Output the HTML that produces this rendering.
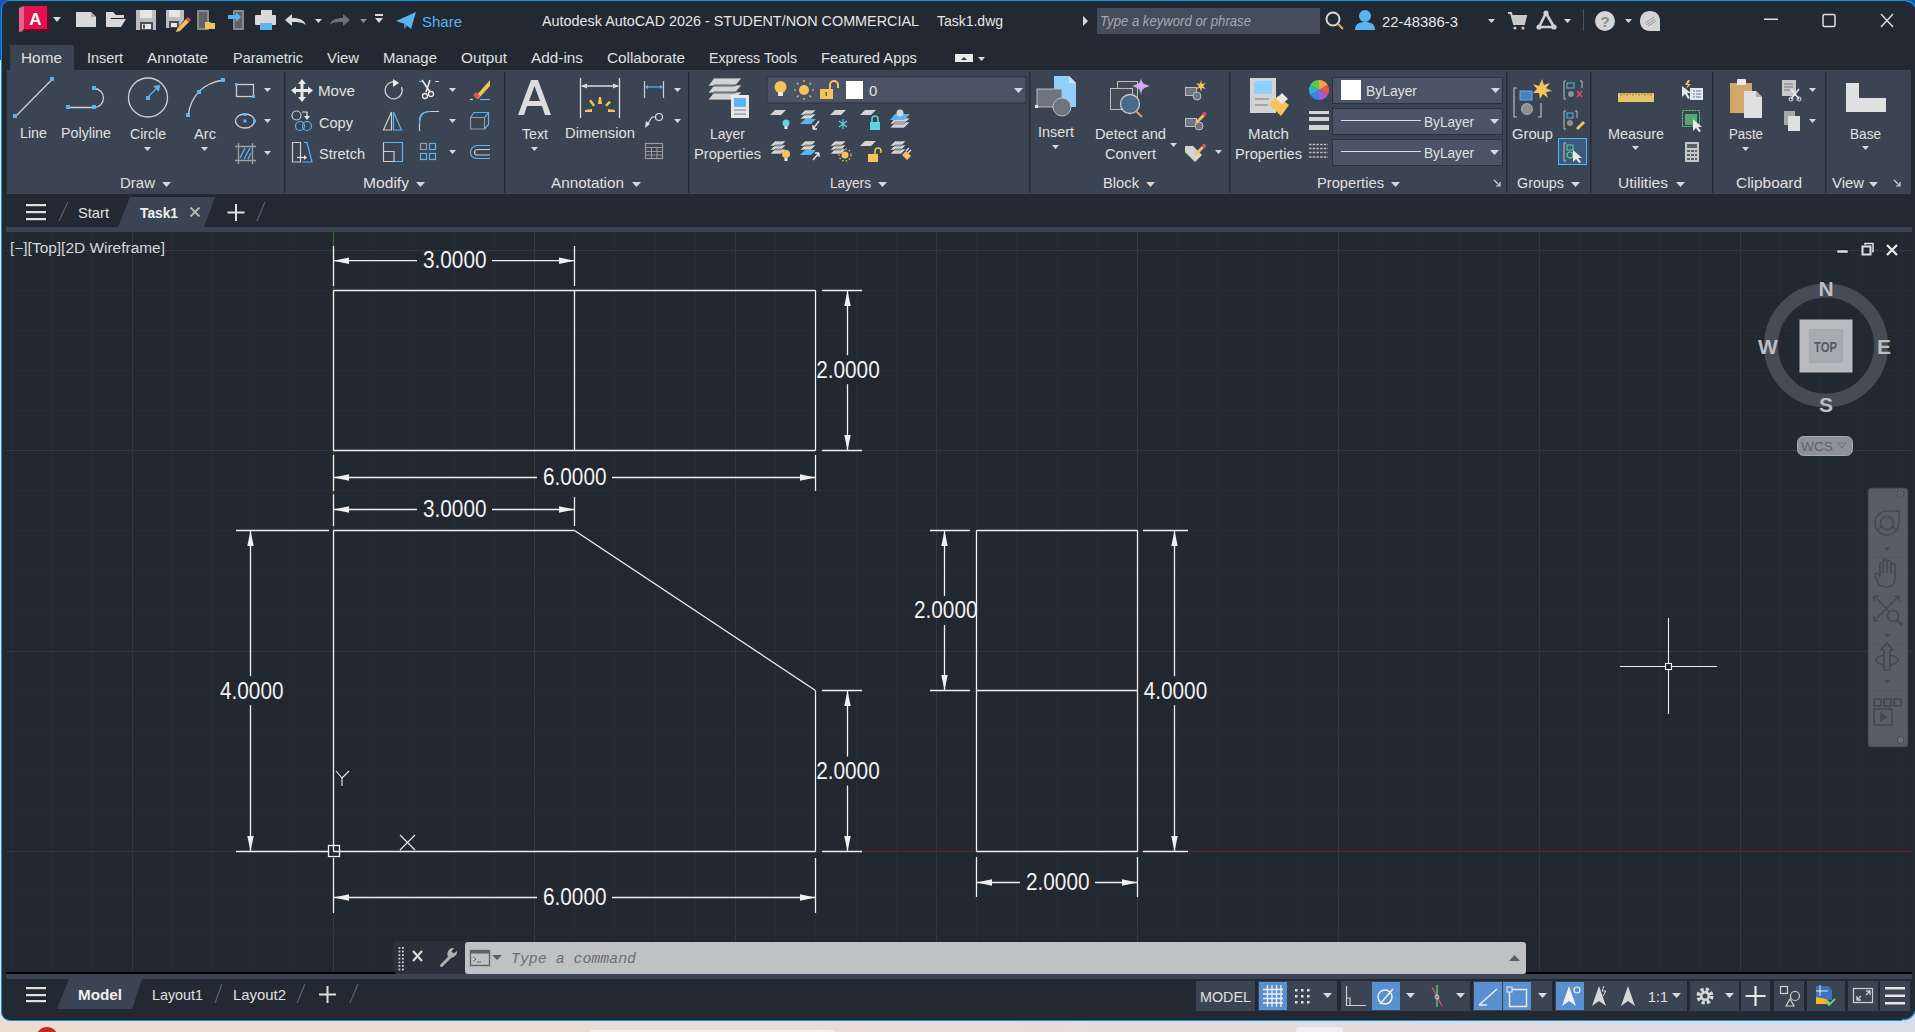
<!DOCTYPE html>
<html><head><meta charset="utf-8">
<style>
*{margin:0;padding:0;box-sizing:border-box}
html,body{width:1915px;height:1032px;overflow:hidden;background:linear-gradient(to right,#eddcd2,#eadcd6 50%,#dcdce8);font-family:"Liberation Sans",sans-serif;color:#e8e8e8}
.a{position:absolute}
#win{position:absolute;left:0;top:0;width:1915px;height:1021px;overflow:hidden}
svg{position:absolute;left:0;top:0;overflow:visible}
</style></head><body>
<div class="a" style="left:0;top:0;width:30px;height:60px;background:#1f4fb8"></div><div class="a" style="left:0;top:60px;width:1px;height:960px;background:#efe2da"></div>
<div class="a" style="left:1885px;top:0;width:30px;height:30px;background:#1a50c0"></div>
<div class="a" style="left:590px;top:1030px;width:245px;height:6px;border-radius:4px;background:#f4f0f0"></div>
<div class="a" style="left:1296px;top:1027px;width:47px;height:8px;border-radius:4px;background:#f0eef2"></div>
<div class="a" style="left:36px;top:1027px;width:22px;height:22px;border-radius:50%;background:#c8281e"></div>
<div class="a" style="left:1px;top:0;width:1925px;height:1021px;border-radius:9px;border:1px solid #0a96e0;background:#222933"></div>
<div id="win">
<!-- title bar -->
<svg width="1915" height="42">
<!-- app logo -->
<path d="M19 8 L24 6 L24 31 L19 32 Z" fill="#e8638a"/>
<rect x="24" y="6" width="23" height="23" fill="#e2114f"/>
<path d="M22 31 L49 31 L49 11 L47 11 L47 29 L24 29 Z" fill="#7a0424"/>
<text x="35.5" y="25" font-size="17" font-weight="bold" fill="#fff" text-anchor="middle" font-family="Liberation Sans">A</text>
<path d="M53 17 L61 17 L57 22 Z" fill="#d8d8d8"/>
<!-- new -->
<path d="M76 12 L91 12 L96 17 L96 27 L76 27 Z" fill="#d9d9d9"/>
<path d="M91 12 L91 17 L96 17 Z" fill="#a9a9a9"/>
<!-- open -->
<path d="M106 12 L113 12 L116 15 L124 15 L124 18 L111 18 L106 27 Z" fill="#d9d9d9"/>
<path d="M109 19 L126 19 L121 27 L106 27 Z" fill="#d9d9d9"/>
<!-- save -->
<path d="M136 10 L156 10 L156 30 L136 30 Z" fill="#bdbdbd"/>
<rect x="140" y="10" width="12" height="8" fill="#e6e6e6"/>
<rect x="140" y="22" width="13" height="8" fill="#4a4e55"/>
<rect x="142" y="24" width="9" height="5" fill="#e6e6e6"/>
<rect x="143" y="24.5" width="2" height="4" fill="#4a4e55"/>
<!-- saveas -->
<path d="M166 10 L184 10 L184 20 L178 28 L166 28 Z" fill="#bdbdbd"/>
<rect x="169" y="10" width="11" height="7" fill="#e6e6e6"/>
<rect x="169" y="21" width="10" height="7" fill="#4a4e55"/>
<rect x="171" y="23" width="6" height="4" fill="#e6e6e6"/>
<path d="M177 29 L186 19 L189 22 L180 31 L176 32 Z" fill="#f2c25a"/>
<path d="M186 19 L188 17 L191 20 L189 22 Z" fill="#e84a5f"/>
<!-- open from phone -->
<rect x="197" y="10" width="12" height="20" rx="1" fill="#8a8a8a"/>
<rect x="199" y="12" width="8" height="16" fill="#5e6166"/>
<path d="M205 22 L210 22 L211 23 L215 23 L215 29 L205 29 Z" fill="#f2c25a"/>
<!-- import -->
<rect x="233" y="10" width="11" height="20" rx="1" fill="#8a8a8a"/>
<rect x="235" y="12" width="7" height="16" fill="#5e6166"/>
<path d="M228 15 L236 15 L236 12 L241 17 L236 22 L236 19 L228 19 Z" fill="#5ab4ef"/>
<!-- print -->
<rect x="261" y="10" width="11" height="5" fill="#d9d9d9"/>
<rect x="255" y="15" width="21" height="10" rx="1" fill="#d9d9d9"/>
<rect x="260" y="23" width="12" height="7" fill="#5ab4ef"/>
<!-- undo -->
<path d="M285 20 L292 14 L292 18 C298 18 304 19 306 25 C302 22 298 22 292 22 L292 26 Z" fill="#d9d9d9"/>
<path d="M315 19 L322 19 L318.5 23 Z" fill="#d9d9d9"/>
<!-- redo -->
<path d="M350 20 L343 14 L343 18 C337 18 331 19 330 25 C333 22 337 22 343 22 L343 26 Z" fill="#6b6f77"/>
<path d="M360 19 L367 19 L363.5 23 Z" fill="#8b8f97"/>
<!-- customize -->
<rect x="375" y="14" width="8" height="2" fill="#d9d9d9"/>
<path d="M375 18 L383 18 L379 23 Z" fill="#d9d9d9"/>
<!-- share -->
<path d="M396 21 L416 12 L411 29 L405 24 Z M405 24 L416 12 L405 28 Z" fill="#5ab4ef"/>
<path d="M404 23 L404 29 L407 26 Z" fill="#3f8fcb"/>
<text x="422" y="27" font-size="15" fill="#5ab4ef" font-family="Liberation Sans">Share</text>
<!-- title -->
<text x="542" y="26" font-size="15" fill="#e6e6e6" font-family="Liberation Sans" textLength="377" lengthAdjust="spacingAndGlyphs">Autodesk AutoCAD 2026 - STUDENT/NON COMMERCIAL</text>
<text x="937" y="26" font-size="15" fill="#e6e6e6" font-family="Liberation Sans" textLength="66" lengthAdjust="spacingAndGlyphs">Task1.dwg</text>
<!-- search -->
<path d="M1083 16 L1088 21 L1083 26 Z" fill="#d9d9d9"/>
<rect x="1097" y="8" width="223" height="26" fill="#454c5b"/>
<text x="1100" y="26" font-size="14" font-style="italic" fill="#a3a8b0" font-family="Liberation Sans" textLength="151" lengthAdjust="spacingAndGlyphs">Type a keyword or phrase</text>
<circle cx="1333" cy="19" r="6.5" fill="none" stroke="#d9d9d9" stroke-width="2"/>
<path d="M1338 24 L1343 29" stroke="#d9a35a" stroke-width="2.2"/>
<circle cx="1365" cy="16" r="6" fill="#5ab4ef"/>
<path d="M1355 30 C1355 24 1359 22 1365 22 C1371 22 1375 24 1375 30 Z" fill="#5ab4ef"/>
<text x="1382" y="27" font-size="15" fill="#e6e6e6" font-family="Liberation Sans" textLength="76" lengthAdjust="spacingAndGlyphs">22-48386-3</text>
<path d="M1488 19 L1495 19 L1491.5 23 Z" fill="#d9d9d9"/>
<!-- cart -->
<path d="M1508 13 L1511 13 L1514 24 L1524 24 L1526 16 L1512 16" fill="none" stroke="#c9c9c9" stroke-width="2"/>
<rect x="1513" y="17" width="12" height="6" fill="#c9c9c9"/>
<circle cx="1515" cy="28" r="1.6" fill="#c9c9c9"/><circle cx="1523" cy="28" r="1.6" fill="#c9c9c9"/>
<!-- a360 -->
<path d="M1546 13 L1539 27 L1554 27 Z" fill="none" stroke="#d0d0d0" stroke-width="2.6" stroke-linejoin="round"/>
<circle cx="1546" cy="13" r="2.6" fill="#d0d0d0"/><circle cx="1539" cy="27" r="2.6" fill="#d0d0d0"/><circle cx="1554" cy="27" r="2.6" fill="#d0d0d0"/>
<path d="M1564 19 L1571 19 L1567.5 23 Z" fill="#d9d9d9"/>
<rect x="1583" y="9" width="1" height="22" fill="#4b5260"/>
<!-- help -->
<circle cx="1605" cy="21" r="10" fill="#d4d4d4"/>
<text x="1605" y="27" font-size="15" font-weight="bold" fill="#8a8a8a" text-anchor="middle" font-family="Liberation Sans">?</text>
<path d="M1625 19 L1632 19 L1628.5 23 Z" fill="#d9d9d9"/>
<!-- chat -->
<path d="M1650 11 C1656 11 1660 15 1660 21 L1660 31 L1650 31 C1644 31 1640 27 1640 21 C1640 15 1644 11 1650 11 Z" fill="#d4d4d4"/>
<path d="M1645 23 L1654 17 M1646 25 L1655 19 M1648 26 L1656 21" stroke="#9a9a9a" stroke-width="1"/>
<!-- window controls -->
<rect x="1764" y="18.5" width="14" height="1.5" fill="#e0e0e0"/>
<rect x="1823" y="14.5" width="12" height="12" rx="1.5" fill="none" stroke="#e0e0e0" stroke-width="1.5"/>
<path d="M1881 14 L1893 27 M1893 14 L1881 27" stroke="#e0e0e0" stroke-width="1.4"/>
</svg>
<!-- tabs -->
<div class="a" style="left:10px;top:45px;width:64px;height:26px;background:#3b4453"></div>
<svg width="1000" height="80" font-family="Liberation Sans" font-size="15" fill="#e0e0e0">
<text x="21" y="63" textLength="41" lengthAdjust="spacingAndGlyphs">Home</text>
<text x="87" y="63" textLength="36" lengthAdjust="spacingAndGlyphs">Insert</text>
<text x="147" y="63" textLength="61" lengthAdjust="spacingAndGlyphs">Annotate</text>
<text x="233" y="63" textLength="70" lengthAdjust="spacingAndGlyphs">Parametric</text>
<text x="327" y="63" textLength="32" lengthAdjust="spacingAndGlyphs">View</text>
<text x="383" y="63" textLength="54" lengthAdjust="spacingAndGlyphs">Manage</text>
<text x="461" y="63" textLength="46" lengthAdjust="spacingAndGlyphs">Output</text>
<text x="531" y="63" textLength="52" lengthAdjust="spacingAndGlyphs">Add-ins</text>
<text x="607" y="63" textLength="78" lengthAdjust="spacingAndGlyphs">Collaborate</text>
<text x="709" y="63" textLength="88" lengthAdjust="spacingAndGlyphs">Express Tools</text>
<text x="821" y="63" textLength="96" lengthAdjust="spacingAndGlyphs">Featured Apps</text>
<rect x="955" y="54" width="18" height="8" fill="#e8e8e8"/>
<path d="M961 60 L967 60 L964 57 Z" fill="#333"/>
<path d="M978 57 L985 57 L981.5 61 Z" fill="#d9d9d9"/>
</svg>
<div class="a" style="left:7px;top:70px;width:1904px;height:124px;background:#3b4453"></div>
<svg width="1915" height="232" font-family="Liberation Sans" font-size="15" fill="#e0e0e0">
<defs>
<path id="dd" d="M0 0 L9 0 L4.5 5 Z" fill="#d9d9d9"/>
<path id="dds" d="M0 0 L7 0 L3.5 4 Z" fill="#d9d9d9"/>
</defs>
<!-- panel separators -->
<g fill="#262c36">
<rect x="284" y="72" width="1.5" height="121"/>
<rect x="504" y="72" width="1.5" height="121"/>
<rect x="688" y="72" width="1.5" height="121"/>
<rect x="1029" y="72" width="1.5" height="121"/>
<rect x="1229" y="72" width="1.5" height="121"/>
<rect x="1506" y="72" width="1.5" height="121"/>
<rect x="1590" y="72" width="1.5" height="121"/>
<rect x="1712" y="72" width="1.5" height="121"/>
<rect x="1825" y="72" width="1.5" height="121"/>
</g>
<!-- ============ DRAW ============ -->
<path d="M15.5 116.5 L52 79.5" stroke="#cfcfcf" stroke-width="1.3"/>
<rect x="13" y="114" width="4" height="4" fill="#5ab4ef"/><rect x="50" y="77" width="4" height="4" fill="#5ab4ef"/>
<path d="M68 107.5 L94 107.5 A 9.5 9.5 0 0 0 94 88.5" fill="none" stroke="#cfcfcf" stroke-width="1.3"/>
<rect x="66" y="105" width="4" height="4" fill="#5ab4ef"/><rect x="92" y="105" width="4" height="4" fill="#5ab4ef"/><rect x="92" y="86" width="4" height="4" fill="#5ab4ef"/>
<circle cx="148" cy="97.5" r="19.5" fill="none" stroke="#cfcfcf" stroke-width="1.3"/>
<path d="M148 97 L158 87" stroke="#5ab4ef" stroke-width="1.3"/><path d="M160 85 L153 86 L159 92 Z" fill="#5ab4ef"/>
<rect x="146" y="96" width="4" height="4" fill="#5ab4ef"/>
<path d="M188 115.5 C191 96 203 83 223.5 80" fill="none" stroke="#cfcfcf" stroke-width="1.3"/>
<rect x="186" y="113" width="4" height="4" fill="#5ab4ef"/><rect x="197" y="90" width="4" height="4" fill="#5ab4ef"/><rect x="221" y="78" width="4" height="4" fill="#5ab4ef"/>
<text x="20" y="138" textLength="27" lengthAdjust="spacingAndGlyphs">Line</text>
<text x="61" y="138" textLength="50" lengthAdjust="spacingAndGlyphs">Polyline</text>
<text x="130" y="139" textLength="36" lengthAdjust="spacingAndGlyphs">Circle</text>
<text x="194" y="139" textLength="22" lengthAdjust="spacingAndGlyphs">Arc</text>
<path d="M144 147 L151 147 L147.5 151 Z" fill="#d9d9d9"/><path d="M201 147 L208 147 L204.5 151 Z" fill="#d9d9d9"/>
<!-- rect/ellipse/hatch -->
<rect x="236.5" y="84.5" width="17" height="12" fill="none" stroke="#cfcfcf" stroke-width="1.3"/>
<rect x="235" y="83" width="3" height="3" fill="#5ab4ef"/><rect x="252" y="95" width="3" height="3" fill="#5ab4ef"/>
<path d="M264 88 L271 88 L267.5 92 Z" fill="#d9d9d9"/>
<ellipse cx="245" cy="121" rx="9.5" ry="7" fill="none" stroke="#cfcfcf" stroke-width="1.3"/>
<rect x="243.5" y="113" width="3" height="3" fill="#5ab4ef"/><rect x="243.5" y="119.5" width="3" height="3" fill="#5ab4ef"/><rect x="253" y="119.5" width="3" height="3" fill="#5ab4ef"/>
<path d="M264 119 L271 119 L267.5 123 Z" fill="#d9d9d9"/>
<path d="M235 146.5 L256 146.5 M235 160.5 L256 160.5 M238.5 143 L238.5 164 M252.5 143 L252.5 164" stroke="#a0a0a0" stroke-width="1.3"/>
<path d="M240 158 L245 148 M244 159 L250 148 M248 159 L251 153" stroke="#5ab4ef" stroke-width="1.4"/>
<path d="M264 151 L271 151 L267.5 155 Z" fill="#d9d9d9"/>
<text x="120" y="188" textLength="35" lengthAdjust="spacingAndGlyphs">Draw</text>
<path d="M162 182 L171 182 L166.5 187 Z" fill="#d9d9d9"/>
<!-- ============ MODIFY ============ -->
<g fill="#e8e8e8"><path d="M302 79 L306 84 L303.5 84 L303.5 89 L308 89 L308 86.5 L313 90.5 L308 94.5 L308 92 L303.5 92 L303.5 97 L306 97 L302 102 L298 97 L300.5 97 L300.5 92 L296 92 L296 94.5 L291 90.5 L296 86.5 L296 89 L300.5 89 L300.5 84 L298 84 Z"/></g>
<text x="318" y="96" textLength="37" lengthAdjust="spacingAndGlyphs">Move</text>
<circle cx="296.5" cy="115.5" r="4.5" fill="none" stroke="#cfcfcf" stroke-width="1.2"/>
<path d="M302 112 L307 112 L307 117" fill="none" stroke="#e8e8e8" stroke-width="1.2"/><path d="M304 116 L310 116 L307 120 Z" fill="#e8e8e8"/>
<circle cx="300" cy="126" r="4.5" fill="none" stroke="#5ab4ef" stroke-width="1.2"/><circle cx="307" cy="126" r="4.5" fill="none" stroke="#5ab4ef" stroke-width="1.2"/>
<text x="319" y="128" textLength="34" lengthAdjust="spacingAndGlyphs">Copy</text>
<path d="M292.5 142.5 L300.5 142.5 L300.5 162 L292.5 162 Z" fill="none" stroke="#cfcfcf" stroke-width="1.2"/>
<path d="M304 142.5 L307 142.5 L312 162 L302 162" fill="none" stroke="#5ab4ef" stroke-width="1.2"/>
<path d="M297 157.5 L305 157.5" stroke="#e8e8e8" stroke-width="1.2"/><path d="M304 155 L307 157.5 L304 160 Z" fill="#e8e8e8"/>
<text x="319" y="159" textLength="46" lengthAdjust="spacingAndGlyphs">Stretch</text>
<!-- rotate -->
<path d="M398 83 A 8.5 8.5 0 1 0 401.5 87" fill="none" stroke="#cfcfcf" stroke-width="1.3"/>
<path d="M393 79 L399 83 L393 87 Z" fill="#e8e8e8"/>
<!-- trim -->
<path d="M419 81.5 L424 81.5 M435 81.5 L439 81.5" stroke="#cfcfcf" stroke-width="1.2"/>
<path d="M419 81.5 L424 81.5" stroke="#5ab4ef" stroke-width="1.2"/>
<path d="M422 80 L430 92 M430 80 L426 92" stroke="#e8e8e8" stroke-width="1.6"/>
<circle cx="425" cy="96" r="2.5" fill="none" stroke="#e8e8e8" stroke-width="1.3"/><circle cx="431" cy="94" r="2.5" fill="none" stroke="#e8e8e8" stroke-width="1.3"/>
<path d="M449 88 L456 88 L452.5 92 Z" fill="#d9d9d9"/>
<!-- erase -->
<path d="M475 97 L490 80 L490 86 L478 99 Z" fill="#f2c25a"/>
<path d="M473 95 L476 92 L480 96 L477 99 Z" fill="#e84a5f"/>
<path d="M470 99.5 L473 99.5" stroke="#cfcfcf" stroke-width="1.2"/><path d="M480 99.5 L490 99.5" stroke="#5ab4ef" stroke-width="1.2"/>
<!-- mirror -->
<path d="M391.5 112 L391.5 130 L383.5 130 Z" fill="none" stroke="#cfcfcf" stroke-width="1.2"/>
<path d="M393.5 112 L393.5 130 L401.5 130 Z" fill="none" stroke="#5ab4ef" stroke-width="1.2"/>
<!-- fillet -->
<path d="M419.5 131 L419.5 121 C419.5 115 423 111.5 430 111.5 L439 111.5" fill="none" stroke="#cfcfcf" stroke-width="1.2"/>
<path d="M419.5 124 C419.5 115 423 111.5 430 111.5" fill="none" stroke="#5ab4ef" stroke-width="1.2"/>
<path d="M449 119 L456 119 L452.5 123 Z" fill="#d9d9d9"/>
<!-- explode -->
<path d="M470.5 117.5 L484.5 117.5 L484.5 129 L470.5 129 Z" fill="none" stroke="#9a9a9a" stroke-width="1.2"/>
<path d="M470.5 117.5 L474 112.5 L488.5 112.5 L484.5 117.5 M488.5 112.5 L488.5 124.5 L484.5 129" fill="none" stroke="#5ab4ef" stroke-width="1.2"/>
<!-- scale -->
<path d="M383.5 142.5 L402.5 142.5 L402.5 161.5 L394 161.5" fill="none" stroke="#5ab4ef" stroke-width="1.2"/>
<path d="M383.5 142.5 L383.5 161.5 L394 161.5 L394 151.5 L383.5 151.5" fill="none" stroke="#cfcfcf" stroke-width="1.2"/>
<!-- array -->
<rect x="420.5" y="143.5" width="6" height="6" fill="none" stroke="#9a9a9a" stroke-width="1.2"/>
<rect x="429.5" y="143.5" width="6" height="6" fill="none" stroke="#5ab4ef" stroke-width="1.2"/>
<rect x="420.5" y="153.5" width="6" height="6" fill="none" stroke="#5ab4ef" stroke-width="1.2"/>
<rect x="429.5" y="153.5" width="6" height="6" fill="none" stroke="#5ab4ef" stroke-width="1.2"/>
<path d="M449 150 L456 150 L452.5 154 Z" fill="#d9d9d9"/>
<!-- offset -->
<path d="M490 145.5 L478 145.5 C473 145.5 470.5 149 470.5 152.5 C470.5 156 473 158.5 478 158.5 L490 158.5" fill="none" stroke="#5ab4ef" stroke-width="1.2"/>
<path d="M490 149.5 L478 149.5 C475.5 149.5 474.5 151 474.5 152.5 C474.5 154 475.5 155 478 155 L490 155" fill="none" stroke="#cfcfcf" stroke-width="1.2"/>
<text x="363" y="188" textLength="46" lengthAdjust="spacingAndGlyphs">Modify</text>
<path d="M416 182 L425 182 L420.5 187 Z" fill="#d9d9d9"/>
<!-- ============ ANNOTATION ============ -->
<path d="M518 115 L531 80 L538 80 L551 115 L545 115 L542 106 L527 106 L524 115 Z M529 101 L540 101 L534.5 86 Z" fill="#dcdcdc"/>
<text x="522" y="139" textLength="26" lengthAdjust="spacingAndGlyphs">Text</text>
<path d="M531 147 L538 147 L534.5 151 Z" fill="#d9d9d9"/>
<path d="M580.5 78 L580.5 118 M619.5 78 L619.5 118 M582 86 L618 86" stroke="#dcdcdc" stroke-width="1.3"/>
<path d="M581 86 L587 83.5 L587 88.5 Z M619 86 L613 83.5 L613 88.5 Z" fill="#dcdcdc"/>
<g fill="#f5c35a"><path d="M599 97 L601 97 L602 104 L598 104 Z"/><path d="M589 101 L591 99.5 L595 105 L593 106.5 Z"/><path d="M609 101 L611 102.5 L607 106.5 L605 105 Z"/><path d="M585 110 L592 109 L592 112 L585 112 Z"/><path d="M608 109 L615 110 L615 112 L608 112 Z"/></g>
<text x="565" y="138" textLength="70" lengthAdjust="spacingAndGlyphs">Dimension</text>
<path d="M644.5 81 L644.5 98 M663.5 81 L663.5 98" stroke="#cfcfcf" stroke-width="1.2"/>
<path d="M646 87 L662 87" stroke="#5ab4ef" stroke-width="1.2"/><path d="M645 87 L648 85 L648 89 Z M663 87 L660 85 L660 89 Z" fill="#5ab4ef"/>
<path d="M674 88 L681 88 L677.5 92 Z" fill="#d9d9d9"/>
<circle cx="659" cy="117" r="3.5" fill="none" stroke="#dcdcdc" stroke-width="1.2"/>
<path d="M655.5 117 L652 117 L647 125" fill="none" stroke="#dcdcdc" stroke-width="1.2"/><path d="M645 128 L646 121 L650 124 Z" fill="#dcdcdc"/>
<path d="M674 119 L681 119 L677.5 123 Z" fill="#d9d9d9"/>
<rect x="645.5" y="143.5" width="17" height="15" fill="none" stroke="#9a9a9a" stroke-width="1.2"/>
<path d="M645.5 147.5 L662.5 147.5 M645.5 151.5 L662.5 151.5 M645.5 155 L662.5 155 M651.5 147.5 L651.5 158.5 M657 147.5 L657 158.5" stroke="#9a9a9a" stroke-width="1"/>
<text x="551" y="188" textLength="73" lengthAdjust="spacingAndGlyphs">Annotation</text>
<path d="M632 182 L641 182 L636.5 187 Z" fill="#d9d9d9"/>
<!-- ============ LAYERS ============ -->
<path d="M714 78 L742 78 L735 86 L708 86 Z M714 85 L742 85 L735 93 L708 93 Z M714 92 L742 92 L735 100 L708 100 Z" fill="#d4d4d4" stroke="#3b4453" stroke-width="0.8"/>
<rect x="731" y="95" width="18" height="23" fill="#e8e8e8"/>
<rect x="734" y="98" width="12" height="9" fill="#5ab4ef"/>
<path d="M734 110 L746 110 M734 114 L746 114" stroke="#777" stroke-width="1"/>
<text x="710" y="139" textLength="35" lengthAdjust="spacingAndGlyphs">Layer</text>
<text x="694" y="159" textLength="67" lengthAdjust="spacingAndGlyphs">Properties</text>
<rect x="767" y="77" width="259" height="26" fill="#4a5466" stroke="#2c323d" stroke-width="1"/>
<circle cx="780.5" cy="87" r="6" fill="#f5c35a"/><rect x="778" y="92" width="5" height="4" fill="#e8e8e8"/>
<circle cx="804" cy="90" r="5" fill="#f5c35a"/>
<path d="M804 80 L804 82 M804 98 L804 100 M794 90 L796 90 M812 90 L814 90 M797 83 L798.5 84.5 M809.5 95.5 L811 97 M811 83 L809.5 84.5 M798.5 95.5 L797 97" stroke="#f5c35a" stroke-width="1.2"/>
<rect x="820" y="89" width="13" height="10" fill="#f5c35a"/>
<path d="M830 89 L830 85 A 4 4 0 0 1 838 85 L838 88" fill="none" stroke="#f5c35a" stroke-width="2"/>
<rect x="825.5" y="92" width="1.5" height="4" fill="#5a5a5a"/>
<rect x="846" y="81" width="17" height="18" fill="#ffffff"/>
<text x="869" y="96">0</text>
<path d="M1014 88 L1023 88 L1018.5 93 Z" fill="#d9d9d9"/>
<g transform="translate(770,110)"><path d="M5 0 L16 0 L11 5 L0 5 Z" fill="#d4d4d4"/><circle cx="16" cy="13" r="3.5" fill="#5fd3e0"/><rect x="14.5" y="16" width="3" height="3" fill="#e8e8e8"/></g>
<g transform="translate(800,110)"><path d="M5 0 L16 0 L11 5 L0 5 Z M5 4 L16 4 L11 9 L0 9 Z" fill="#d4d4d4" stroke="#3b4453" stroke-width="0.6"/><path d="M5 9 L16 9 L11 14 L0 14 Z" fill="#5ab4ef"/><path d="M19 11 L13 19 M13 19 L13 15 M13 19 L17 19" stroke="#e8e8e8" stroke-width="1.3"/></g>
<g transform="translate(830,110)"><path d="M5 0 L16 0 L11 5 L0 5 Z" fill="#d4d4d4"/><path d="M13 9 L13 19 M9 11 L17 17 M17 11 L9 17" stroke="#5fd3e0" stroke-width="1.2"/></g>
<g transform="translate(860,110)"><path d="M5 0 L16 0 L11 5 L0 5 Z" fill="#d4d4d4"/><rect x="10" y="12" width="10" height="8" fill="#5fd3e0"/><path d="M12 12 L12 9 A 3 3 0 0 1 18 9 L18 12" fill="none" stroke="#5fd3e0" stroke-width="1.5"/></g>
<g transform="translate(890,110)"><path d="M5 12 L20 12 L14 18 L0 18 Z M5 8 L20 8 L14 14 L0 14 Z" fill="#d4d4d4" stroke="#3b4453" stroke-width="0.6"/><path d="M5 4 L20 4 L14 10 L0 10 Z" fill="#5ab4ef"/><circle cx="10" cy="3" r="3.5" fill="#d4d4d4"/></g>
<g transform="translate(770,141)"><path d="M5 0 L16 0 L11 5 L0 5 Z M5 4 L16 4 L11 9 L0 9 Z M5 8 L16 8 L11 13 L0 13 Z" fill="#d4d4d4" stroke="#3b4453" stroke-width="0.6"/><circle cx="16" cy="13" r="4" fill="#f5c35a"/><rect x="14.5" y="17" width="3" height="3" fill="#e8e8e8"/></g>
<g transform="translate(800,141)"><path d="M5 0 L16 0 L11 5 L0 5 Z M5 4 L16 4 L11 9 L0 9 Z" fill="#d4d4d4" stroke="#3b4453" stroke-width="0.6"/><path d="M5 9 L16 9 L11 14 L0 14 Z" fill="#5ab4ef"/><path d="M13 19 L19 12 M19 12 L15 12 M19 12 L19 16" stroke="#e8e8e8" stroke-width="1.3"/></g>
<g transform="translate(830,141)"><path d="M5 0 L16 0 L11 5 L0 5 Z M5 4 L16 4 L11 9 L0 9 Z M5 8 L16 8 L11 13 L0 13 Z" fill="#d4d4d4" stroke="#3b4453" stroke-width="0.6"/><circle cx="15" cy="14" r="3.5" fill="#f5c35a"/><circle cx="15" cy="14" r="6" fill="none" stroke="#f5c35a" stroke-width="1.2" stroke-dasharray="1.5 2"/></g>
<g transform="translate(860,141)"><path d="M5 0 L16 0 L11 5 L0 5 Z" fill="#d4d4d4"/><rect x="8" y="13" width="10" height="8" fill="#f5c35a"/><path d="M15 13 L15 10 A 3 3 0 0 1 21 10 L21 12" fill="none" stroke="#f5c35a" stroke-width="1.5"/></g>
<g transform="translate(890,141)"><path d="M5 0 L16 0 L11 5 L0 5 Z M5 4 L16 4 L11 9 L0 9 Z M5 8 L16 8 L11 13 L0 13 Z" fill="#d4d4d4" stroke="#3b4453" stroke-width="0.6"/><path d="M12 14 L16 10 L21 15 L17 19 Z" fill="#f5c35a"/><path d="M16 10 L19 7 M18 12 L21 9" stroke="#e8e8e8" stroke-width="1.3"/></g>
<text x="830" y="188" textLength="41" lengthAdjust="spacingAndGlyphs">Layers</text>
<path d="M878 182 L887 182 L882.5 187 Z" fill="#d9d9d9"/>
<!-- ============ BLOCK ============ -->
<path d="M1054 76 L1069 76 L1076 83 L1076 107 L1054 107 Z" fill="#8fd0ff"/>
<path d="M1069 76 L1069 83 L1076 83 Z" fill="#cbe8ff"/>
<rect x="1037" y="89" width="25" height="18" fill="#6f7580" stroke="#bdbdbd" stroke-width="1"/>
<circle cx="1062" cy="107" r="9" fill="#6f7580" stroke="#bdbdbd" stroke-width="1"/>
<rect x="1035" y="105" width="3" height="3" fill="#e8e8e8"/>
<text x="1038" y="137" textLength="36" lengthAdjust="spacingAndGlyphs">Insert</text>
<path d="M1052 145 L1059 145 L1055.5 149 Z" fill="#d9d9d9"/>
<rect x="1117.5" y="81.5" width="20" height="20" fill="#454b56" stroke="#bdbdbd" stroke-width="1"/>
<rect x="1110.5" y="88.5" width="22" height="21" fill="#454b56" stroke="#bdbdbd" stroke-width="1"/>
<circle cx="1130" cy="104" r="9.5" fill="#4a6a8a" stroke="#c8c8c8" stroke-width="1.3"/>
<path d="M1136 111 L1142 117" stroke="#d9a35a" stroke-width="1.8"/>
<path d="M1141 78 C1142 83 1143 84 1150 86 C1143 88 1142 89 1141 95 C1140 89 1139 88 1132 86 C1139 84 1140 83 1141 78 Z" fill="#d5a8f0"/>
<text x="1095" y="139" textLength="71" lengthAdjust="spacingAndGlyphs">Detect and</text>
<text x="1105" y="159" textLength="51" lengthAdjust="spacingAndGlyphs">Convert</text>
<path d="M1170 143 L1177 143 L1173.5 147 Z" fill="#d9d9d9"/>
<g transform="translate(1185,80)"><rect x="0.5" y="7.5" width="11" height="8" fill="#6f7580" stroke="#bdbdbd" stroke-width="1"/><circle cx="12" cy="16" r="4" fill="#6f7580" stroke="#bdbdbd" stroke-width="1"/><path d="M16 0 L17 4 L21 3 L18 6 L21 9 L17 8 L16 12 L15 8 L11 9 L14 6 L11 3 L15 4 Z" fill="#f5c35a"/></g>
<g transform="translate(1185,111)"><rect x="0.5" y="7.5" width="11" height="8" fill="#6f7580" stroke="#bdbdbd" stroke-width="1"/><circle cx="14" cy="15" r="4" fill="#6f7580" stroke="#bdbdbd" stroke-width="1"/><path d="M10 11 L18 3 L20 5 L12 13 Z" fill="#f5c35a"/><circle cx="19.5" cy="3" r="2" fill="#e84a5f"/></g>
<g transform="translate(1185,142)"><path d="M0 4 L8 4 L17 13 L10 20 L0 10 Z" fill="#d4d4d4"/><path d="M9 12 L17 4 L19 6 L11 14 Z" fill="#f5c35a"/><circle cx="19" cy="4" r="2" fill="#e84a5f"/></g>
<path d="M1215 150 L1222 150 L1218.5 154 Z" fill="#d9d9d9"/>
<text x="1103" y="188" textLength="36" lengthAdjust="spacingAndGlyphs">Block</text>
<path d="M1146 182 L1155 182 L1150.5 187 Z" fill="#d9d9d9"/>
<!-- ============ PROPERTIES ============ -->
<rect x="1250" y="78" width="26" height="35" fill="#d4d4d4"/>
<rect x="1254" y="81" width="18" height="13" fill="#8fd0ff"/>
<path d="M1255 99 L1269 99 M1255 105 L1268 105" stroke="#777" stroke-width="1"/>
<path d="M1269 104 L1278 96 L1289 105 L1281 116 Z" fill="#f5c35a"/>
<path d="M1276 99 L1282 93 L1288 99 L1282 104 Z" fill="#e8e8e8"/>
<text x="1248" y="139" textLength="41" lengthAdjust="spacingAndGlyphs">Match</text>
<text x="1235" y="159" textLength="67" lengthAdjust="spacingAndGlyphs">Properties</text>
<g transform="translate(1319,90)">
<path d="M0 0 L0 -10 A10 10 0 0 1 8.66 -5 Z" fill="#f7a23a"/>
<path d="M0 0 L8.66 -5 A10 10 0 0 1 8.66 5 Z" fill="#e8534a"/>
<path d="M0 0 L8.66 5 A10 10 0 0 1 0 10 Z" fill="#a25ae8"/>
<path d="M0 0 L0 10 A10 10 0 0 1 -8.66 5 Z" fill="#3a7ee8"/>
<path d="M0 0 L-8.66 5 A10 10 0 0 1 -8.66 -5 Z" fill="#2ab4c8"/>
<path d="M0 0 L-8.66 -5 A10 10 0 0 1 0 -10 Z" fill="#5cc85a"/>
</g>
<rect x="1309" y="111" width="20" height="3" fill="#d4d4d4"/><rect x="1309" y="117" width="20" height="4" fill="#d4d4d4"/><rect x="1309" y="125" width="20" height="5" fill="#d4d4d4"/>
<path d="M1309 144.5 L1328 144.5 M1309 148.5 L1328 148.5 M1309 152.5 L1328 152.5 M1309 157 L1328 157" stroke="#bdbdbd" stroke-width="1.3" stroke-dasharray="2.5 1.2"/>
<rect x="1332.5" y="77.5" width="170" height="26" fill="#4a5466" stroke="#2c323d" stroke-width="1"/>
<rect x="1332.5" y="108.5" width="170" height="26" fill="#4a5466" stroke="#2c323d" stroke-width="1"/>
<rect x="1332.5" y="139.5" width="170" height="26" fill="#4a5466" stroke="#2c323d" stroke-width="1"/>
<rect x="1341" y="80" width="20" height="20" fill="#fff"/>
<text x="1366" y="96" textLength="51" lengthAdjust="spacingAndGlyphs">ByLayer</text>
<path d="M1341 120.5 L1421 120.5 M1341 151.5 L1421 151.5" stroke="#e0e0e0" stroke-width="1"/>
<text x="1424" y="127" textLength="50" lengthAdjust="spacingAndGlyphs">ByLayer</text>
<text x="1424" y="158" textLength="50" lengthAdjust="spacingAndGlyphs">ByLayer</text>
<path d="M1491 88 L1500 88 L1495.5 93 Z" fill="#d9d9d9"/><path d="M1490 119 L1499 119 L1494.5 124 Z" fill="#d9d9d9"/><path d="M1490 150 L1499 150 L1494.5 155 Z" fill="#d9d9d9"/>
<text x="1317" y="188" textLength="67" lengthAdjust="spacingAndGlyphs">Properties</text>
<path d="M1391 182 L1400 182 L1395.5 187 Z" fill="#d9d9d9"/>
<path d="M1494 180 L1500 186 M1500 182 L1500 186 L1496 186" stroke="#d0d0d0" stroke-width="1.2" fill="none"/>
<!-- ============ GROUPS ============ -->
<path d="M1517 88 L1514 88 L1514 117 L1517 117 M1541 103 L1541 117 L1538 117" fill="none" stroke="#bdbdbd" stroke-width="1.2"/>
<rect x="1520" y="91" width="12" height="9" fill="#4a7fbf" stroke="#5ab4ef" stroke-width="1"/>
<circle cx="1527" cy="109" r="5.5" fill="#8a8f98" stroke="#bdbdbd" stroke-width="0.8"/>
<path d="M1542 79 L1544 85 L1550 83 L1546 88 L1552 91 L1546 92 L1548 98 L1543 94 L1540 99 L1539 93 L1533 93 L1537 89 L1533 84 L1539 86 Z" fill="#f5c35a"/>
<text x="1512" y="139" textLength="41" lengthAdjust="spacingAndGlyphs">Group</text>
<g transform="translate(1563,80)"><path d="M3 1 L1 1 L1 19 L3 19 M17 1 L19 1 L19 8" fill="none" stroke="#bdbdbd" stroke-width="1"/><rect x="4" y="3" width="7" height="5" fill="none" stroke="#5ab4ef" stroke-width="1"/><circle cx="8" cy="14" r="3" fill="#8a8f98"/><path d="M14 11 L19 17 M19 11 L14 17" stroke="#e84a5f" stroke-width="1.5"/></g>
<g transform="translate(1563,110)"><path d="M3 1 L1 1 L1 19 L3 19 M12 1 L14 1 L14 8" fill="none" stroke="#bdbdbd" stroke-width="1"/><rect x="4" y="3" width="6" height="5" fill="none" stroke="#5ab4ef" stroke-width="1"/><circle cx="7" cy="13" r="3" fill="#8a8f98"/><path d="M13 18 L20 11 L22 13 L15 20 Z" fill="#f5c35a"/></g>
<rect x="1558.5" y="138.5" width="28" height="26" fill="#3c5a7e" stroke="#5ab4ef" stroke-width="1"/>
<g transform="translate(1563,142)"><path d="M3 1 L1 1 L1 19 L3 19" fill="none" stroke="#bdbdbd" stroke-width="1"/><rect x="4" y="3" width="6" height="5" fill="none" stroke="#5fd37a" stroke-width="1"/><circle cx="7" cy="13" r="3" fill="none" stroke="#5fd37a" stroke-width="1.2"/><path d="M10 8 L10 20 L13 17 L16 21 L18 20 L15 16 L19 16 Z" fill="#e8e8e8"/></g>
<text x="1517" y="188" textLength="47" lengthAdjust="spacingAndGlyphs">Groups</text>
<path d="M1571 182 L1580 182 L1575.5 187 Z" fill="#d9d9d9"/>
<!-- ============ UTILITIES ============ -->
<rect x="1618" y="93" width="36" height="9" fill="#e9c46a"/>
<path d="M1621 93 L1621 96 M1624 93 L1624 95 M1627 93 L1627 96 M1630 93 L1630 95 M1633 93 L1633 96 M1636 93 L1636 95 M1639 93 L1639 96 M1642 93 L1642 95 M1645 93 L1645 96 M1648 93 L1648 95 M1651 93 L1651 96" stroke="#a07a2a" stroke-width="1"/>
<text x="1608" y="139" textLength="56" lengthAdjust="spacingAndGlyphs">Measure</text>
<path d="M1632 146 L1639 146 L1635.5 150 Z" fill="#d9d9d9"/>
<g transform="translate(1682,80)"><path d="M0 6 L0 17 L3 14 L6 19 L8 18 L5 13 L9 13 Z" fill="#e8e8e8"/><rect x="8" y="8" width="13" height="12" fill="#e8e8e8"/><path d="M11 11 L13 11 M14 11 L19 11 M11 14 L13 14 M14 14 L19 14 M11 17 L13 17 M14 17 L19 17" stroke="#4a7fbf" stroke-width="1.2"/><path d="M6 0 L3 5 L6 5 L4 9 L9 4 L6 4 L8 0 Z" fill="#f5c35a"/></g>
<g transform="translate(1682,110)"><rect x="0.5" y="0.5" width="17" height="16" fill="none" stroke="#5fd37a" stroke-width="1" stroke-dasharray="2 1"/><rect x="3" y="4" width="12" height="11" fill="#5fd37a" opacity="0.7"/><path d="M11 9 L11 21 L14 18 L17 22 L19 21 L16 17 L20 17 Z" fill="#e8e8e8"/></g>
<g transform="translate(1685,142)"><rect x="0" y="0" width="14" height="20" rx="1" fill="#c8c8c8"/><rect x="2" y="2" width="10" height="4" fill="#5a5f68"/><path d="M2 9 L5 9 M6 9 L9 9 M10 9 L12 9 M2 13 L5 13 M6 13 L9 13 M10 13 L12 13 M2 17 L5 17 M6 17 L9 17 M10 17 L12 17" stroke="#5a5f68" stroke-width="2"/></g>
<text x="1618" y="188" textLength="50" lengthAdjust="spacingAndGlyphs">Utilities</text>
<path d="M1676 182 L1685 182 L1680.5 187 Z" fill="#d9d9d9"/>
<!-- ============ CLIPBOARD ============ -->
<rect x="1730" y="83" width="22" height="30" fill="#d2a76c"/>
<rect x="1737" y="79" width="9" height="6" rx="1" fill="#e8e8e8"/>
<path d="M1744 91 L1756 91 L1762 97 L1762 118 L1744 118 Z" fill="#e0e0e0"/>
<path d="M1756 91 L1756 97 L1762 97 Z" fill="#b0b0b0"/>
<text x="1729" y="139" textLength="34" lengthAdjust="spacingAndGlyphs">Paste</text>
<path d="M1742 147 L1749 147 L1745.5 151 Z" fill="#d9d9d9"/>
<g transform="translate(1782,80)"><rect x="0" y="0" width="14" height="16" fill="#c8c8c8"/><path d="M2 4 L11 4 M2 7 L11 7 M2 10 L8 10" stroke="#777" stroke-width="1"/><path d="M9 9 L17 19 M17 9 L9 19" stroke="#e8e8e8" stroke-width="1.5"/><circle cx="9" cy="19" r="2" fill="none" stroke="#e8e8e8"/><circle cx="17" cy="19" r="2" fill="none" stroke="#e8e8e8"/></g>
<path d="M1809 88 L1816 88 L1812.5 92 Z" fill="#d9d9d9"/>
<g transform="translate(1784,111)"><rect x="0" y="0" width="11" height="14" fill="#a8a8a8"/><rect x="4" y="5" width="12" height="15" fill="#e0e0e0"/></g>
<path d="M1809 119 L1816 119 L1812.5 123 Z" fill="#d9d9d9"/>
<text x="1736" y="188" textLength="66" lengthAdjust="spacingAndGlyphs">Clipboard</text>
<!-- ============ VIEW ============ -->
<path d="M1846 83 L1859 83 L1859 98 L1886 98 L1886 112 L1846 112 Z" fill="#e0e0e0"/>
<text x="1850" y="139" textLength="31" lengthAdjust="spacingAndGlyphs">Base</text>
<path d="M1862 146 L1869 146 L1865.5 150 Z" fill="#d9d9d9"/>
<text x="1832" y="188" textLength="32" lengthAdjust="spacingAndGlyphs">View</text>
<path d="M1869 182 L1878 182 L1873.5 187 Z" fill="#d9d9d9"/>
<path d="M1894 180 L1900 186 M1900 182 L1900 186 L1896 186" stroke="#d0d0d0" stroke-width="1.2" fill="none"/>
<!-- ============ FILE TABS ============ -->
<path d="M130 197 L215 197 L204 227 L118 227 Z" fill="#3b4453"/>
<rect x="26" y="204" width="20" height="2.2" fill="#e0e0e0"/><rect x="26" y="211" width="20" height="2.2" fill="#e0e0e0"/><rect x="26" y="218" width="20" height="2.2" fill="#e0e0e0"/>
<path d="M68 202 L59 221" stroke="#5a6170" stroke-width="1.2"/>
<text x="78" y="218" textLength="31" lengthAdjust="spacingAndGlyphs">Start</text>
<text x="140" y="218" font-weight="bold" fill="#f0f0f0" textLength="38" lengthAdjust="spacingAndGlyphs">Task1</text>
<path d="M190.5 207.5 L199.5 216.5 M199.5 207.5 L190.5 216.5" stroke="#b8b8b8" stroke-width="1.8"/>
<path d="M236 204 L236 221 M227.5 212.5 L244.5 212.5" stroke="#e0e0e0" stroke-width="2"/>
<path d="M265 202 L257 221" stroke="#5a6170" stroke-width="1.2"/>
</svg>
<div class="a" style="left:6px;top:227px;width:1906px;height:5px;background:#3b4453"></div>
<svg width="1915" height="1032">
<rect x="6" y="232" width="1906" height="740" fill="#212830"/>
<path d="M11.5 232V972M52.5 232V972M92.5 232V972M172.5 232V972M212.5 232V972M253.5 232V972M293.5 232V972M373.5 232V972M413.5 232V972M454.5 232V972M494.5 232V972M574.5 232V972M614.5 232V972M655.5 232V972M695.5 232V972M775.5 232V972M815.5 232V972M856.5 232V972M896.5 232V972M976.5 232V972M1016.5 232V972M1057.5 232V972M1097.5 232V972M1177.5 232V972M1217.5 232V972M1258.5 232V972M1298.5 232V972M1378.5 232V972M1418.5 232V972M1459.5 232V972M1499.5 232V972M1579.5 232V972M1619.5 232V972M1660.5 232V972M1700.5 232V972M1780.5 232V972M1820.5 232V972M1861.5 232V972M1901.5 232V972M6 971.5H1912M6 931.5H1912M6 891.5H1912M6 811.5H1912M6 771.5H1912M6 731.5H1912M6 691.5H1912M6 611.5H1912M6 571.5H1912M6 530.5H1912M6 490.5H1912M6 410.5H1912M6 370.5H1912M6 330.5H1912M6 290.5H1912" stroke="#262b37" stroke-width="1" fill="none"/>
<path d="M132.5 232V972M333.5 232V972M534.5 232V972M735.5 232V972M936.5 232V972M1137.5 232V972M1338.5 232V972M1539.5 232V972M1740.5 232V972M6 851.5H1912M6 651.5H1912M6 450.5H1912M6 250.5H1912" stroke="#313747" stroke-width="1" fill="none"/>
<line x1="862" y1="851.5" x2="1912" y2="851.5" stroke="#6c252a" stroke-width="1.2"/>
<line x1="333.5" y1="232" x2="333.5" y2="851" stroke="#2d6a33" stroke-width="1.2"/>
<line x1="333.5" y1="290.5" x2="815.5" y2="290.5" stroke="#f0f0f0" stroke-width="1.3"/>
<line x1="333.5" y1="450.5" x2="815.5" y2="450.5" stroke="#f0f0f0" stroke-width="1.3"/>
<line x1="333.5" y1="290.5" x2="333.5" y2="450.5" stroke="#f0f0f0" stroke-width="1.3"/>
<line x1="574.5" y1="290.5" x2="574.5" y2="450.5" stroke="#f0f0f0" stroke-width="1.3"/>
<line x1="815.5" y1="290.5" x2="815.5" y2="450.5" stroke="#f0f0f0" stroke-width="1.3"/>
<line x1="333.5" y1="246" x2="333.5" y2="286" stroke="#f0f0f0" stroke-width="1.3"/>
<line x1="574.5" y1="246" x2="574.5" y2="286" stroke="#f0f0f0" stroke-width="1.3"/>
<line x1="333.5" y1="260.7" x2="417.0" y2="260.7" stroke="#f0f0f0" stroke-width="1.3"/>
<line x1="492.0" y1="260.7" x2="574.5" y2="260.7" stroke="#f0f0f0" stroke-width="1.3"/>
<polygon points="333.5,260.7 349.0,257.5 349.0,263.9" fill="#f0f0f0"/>
<polygon points="574.5,260.7 559.0,257.5 559.0,263.9" fill="#f0f0f0"/>
<line x1="822" y1="290.5" x2="862" y2="290.5" stroke="#f0f0f0" stroke-width="1.3"/>
<line x1="822" y1="450.5" x2="862" y2="450.5" stroke="#f0f0f0" stroke-width="1.3"/>
<line x1="847.5" y1="290.5" x2="847.5" y2="355.2" stroke="#f0f0f0" stroke-width="1.3"/>
<line x1="847.5" y1="384.2" x2="847.5" y2="450.5" stroke="#f0f0f0" stroke-width="1.3"/>
<polygon points="847.5,290.5 844.3,306.0 850.7,306.0" fill="#f0f0f0"/>
<polygon points="847.5,450.5 844.3,435.0 850.7,435.0" fill="#f0f0f0"/>
<line x1="333.5" y1="455" x2="333.5" y2="491" stroke="#f0f0f0" stroke-width="1.3"/>
<line x1="815.5" y1="455" x2="815.5" y2="491" stroke="#f0f0f0" stroke-width="1.3"/>
<line x1="333.5" y1="477.5" x2="537.0" y2="477.5" stroke="#f0f0f0" stroke-width="1.3"/>
<line x1="612.0" y1="477.5" x2="815.5" y2="477.5" stroke="#f0f0f0" stroke-width="1.3"/>
<polygon points="333.5,477.5 349.0,474.3 349.0,480.7" fill="#f0f0f0"/>
<polygon points="815.5,477.5 800.0,474.3 800.0,480.7" fill="#f0f0f0"/>
<line x1="333.5" y1="530.5" x2="574.5" y2="530.5" stroke="#f0f0f0" stroke-width="1.3"/>
<line x1="574.5" y1="530.5" x2="815.5" y2="690.5" stroke="#f0f0f0" stroke-width="1.3"/>
<line x1="815.5" y1="690.5" x2="815.5" y2="851.5" stroke="#f0f0f0" stroke-width="1.3"/>
<line x1="333.5" y1="851.5" x2="815.5" y2="851.5" stroke="#f0f0f0" stroke-width="1.3"/>
<line x1="333.5" y1="530.5" x2="333.5" y2="851.5" stroke="#f0f0f0" stroke-width="1.3"/>
<line x1="574.5" y1="497" x2="574.5" y2="526" stroke="#f0f0f0" stroke-width="1.3"/>
<line x1="333.5" y1="494.5" x2="333.5" y2="526" stroke="#f0f0f0" stroke-width="1.3"/>
<line x1="333.5" y1="509.5" x2="417.0" y2="509.5" stroke="#f0f0f0" stroke-width="1.3"/>
<line x1="492.0" y1="509.5" x2="574.5" y2="509.5" stroke="#f0f0f0" stroke-width="1.3"/>
<polygon points="333.5,509.5 349.0,506.3 349.0,512.7" fill="#f0f0f0"/>
<polygon points="574.5,509.5 559.0,506.3 559.0,512.7" fill="#f0f0f0"/>
<line x1="236" y1="530.5" x2="329" y2="530.5" stroke="#f0f0f0" stroke-width="1.3"/>
<line x1="236" y1="851.5" x2="329" y2="851.5" stroke="#f0f0f0" stroke-width="1.3"/>
<line x1="250.5" y1="530.5" x2="250.5" y2="676.2" stroke="#f0f0f0" stroke-width="1.3"/>
<line x1="250.5" y1="705.2" x2="250.5" y2="851.5" stroke="#f0f0f0" stroke-width="1.3"/>
<polygon points="250.5,530.5 247.3,546.0 253.7,546.0" fill="#f0f0f0"/>
<polygon points="250.5,851.5 247.3,836.0 253.7,836.0" fill="#f0f0f0"/>
<line x1="822" y1="690.5" x2="862" y2="690.5" stroke="#f0f0f0" stroke-width="1.3"/>
<line x1="822" y1="851.5" x2="862" y2="851.5" stroke="#f0f0f0" stroke-width="1.3"/>
<line x1="847.5" y1="690.5" x2="847.5" y2="756.5" stroke="#f0f0f0" stroke-width="1.3"/>
<line x1="847.5" y1="785.5" x2="847.5" y2="851.5" stroke="#f0f0f0" stroke-width="1.3"/>
<polygon points="847.5,690.5 844.3,706.0 850.7,706.0" fill="#f0f0f0"/>
<polygon points="847.5,851.5 844.3,836.0 850.7,836.0" fill="#f0f0f0"/>
<line x1="333.5" y1="858" x2="333.5" y2="913" stroke="#f0f0f0" stroke-width="1.3"/>
<line x1="815.5" y1="858" x2="815.5" y2="913" stroke="#f0f0f0" stroke-width="1.3"/>
<line x1="333.5" y1="897.5" x2="537.0" y2="897.5" stroke="#f0f0f0" stroke-width="1.3"/>
<line x1="612.0" y1="897.5" x2="815.5" y2="897.5" stroke="#f0f0f0" stroke-width="1.3"/>
<polygon points="333.5,897.5 349.0,894.3 349.0,900.7" fill="#f0f0f0"/>
<polygon points="815.5,897.5 800.0,894.3 800.0,900.7" fill="#f0f0f0"/>
<line x1="976.5" y1="530.5" x2="1137.5" y2="530.5" stroke="#f0f0f0" stroke-width="1.3"/>
<line x1="976.5" y1="690.5" x2="1137.5" y2="690.5" stroke="#f0f0f0" stroke-width="1.3"/>
<line x1="976.5" y1="851.5" x2="1137.5" y2="851.5" stroke="#f0f0f0" stroke-width="1.3"/>
<line x1="976.5" y1="530.5" x2="976.5" y2="851.5" stroke="#f0f0f0" stroke-width="1.3"/>
<line x1="1137.5" y1="530.5" x2="1137.5" y2="851.5" stroke="#f0f0f0" stroke-width="1.3"/>
<line x1="930" y1="530.5" x2="970" y2="530.5" stroke="#f0f0f0" stroke-width="1.3"/>
<line x1="930" y1="690.5" x2="970" y2="690.5" stroke="#f0f0f0" stroke-width="1.3"/>
<line x1="944.5" y1="530.5" x2="944.5" y2="596.0" stroke="#f0f0f0" stroke-width="1.3"/>
<line x1="944.5" y1="625.0" x2="944.5" y2="690.5" stroke="#f0f0f0" stroke-width="1.3"/>
<polygon points="944.5,530.5 941.3,546.0 947.7,546.0" fill="#f0f0f0"/>
<polygon points="944.5,690.5 941.3,675.0 947.7,675.0" fill="#f0f0f0"/>
<line x1="1143" y1="530.5" x2="1188" y2="530.5" stroke="#f0f0f0" stroke-width="1.3"/>
<line x1="1143" y1="851.5" x2="1188" y2="851.5" stroke="#f0f0f0" stroke-width="1.3"/>
<line x1="1174.5" y1="530.5" x2="1174.5" y2="676.2" stroke="#f0f0f0" stroke-width="1.3"/>
<line x1="1174.5" y1="705.2" x2="1174.5" y2="851.5" stroke="#f0f0f0" stroke-width="1.3"/>
<polygon points="1174.5,530.5 1171.3,546.0 1177.7,546.0" fill="#f0f0f0"/>
<polygon points="1174.5,851.5 1171.3,836.0 1177.7,836.0" fill="#f0f0f0"/>
<line x1="976.5" y1="857" x2="976.5" y2="897" stroke="#f0f0f0" stroke-width="1.3"/>
<line x1="1137.5" y1="857" x2="1137.5" y2="897" stroke="#f0f0f0" stroke-width="1.3"/>
<line x1="976.5" y1="882.5" x2="1020.0" y2="882.5" stroke="#f0f0f0" stroke-width="1.3"/>
<line x1="1095.0" y1="882.5" x2="1137.5" y2="882.5" stroke="#f0f0f0" stroke-width="1.3"/>
<polygon points="976.5,882.5 992.0,879.3 992.0,885.7" fill="#f0f0f0"/>
<polygon points="1137.5,882.5 1122.0,879.3 1122.0,885.7" fill="#f0f0f0"/>
<rect x="328.5" y="845.5" width="11" height="11" fill="none" stroke="#f0f0f0" stroke-width="1.3"/>
<line x1="400" y1="835" x2="415" y2="850" stroke="#f0f0f0" stroke-width="1.1"/>
<line x1="415" y1="835" x2="400" y2="850" stroke="#f0f0f0" stroke-width="1.1"/>
<line x1="336" y1="771" x2="342" y2="778" stroke="#f0f0f0" stroke-width="1.1"/>
<line x1="349" y1="771" x2="342" y2="778" stroke="#f0f0f0" stroke-width="1.1"/>
<line x1="342" y1="778" x2="342" y2="786" stroke="#f0f0f0" stroke-width="1.1"/>
<line x1="1620" y1="666.5" x2="1717" y2="666.5" stroke="#f0f0f0" stroke-width="1.1"/>
<line x1="1668.5" y1="618" x2="1668.5" y2="714" stroke="#f0f0f0" stroke-width="1.1"/>
<rect x="1665.5" y="663.5" width="6" height="6" fill="#212830" stroke="#f0f0f0" stroke-width="1.1"/>
<g font-family="Liberation Sans" font-size="23" fill="#f2f2f2"><text x="423.0" y="267.7" textLength="63.5" lengthAdjust="spacingAndGlyphs">3.0000</text><text x="816.2" y="377.5" textLength="63.5" lengthAdjust="spacingAndGlyphs">2.0000</text><text x="543.0" y="484.5" textLength="63.5" lengthAdjust="spacingAndGlyphs">6.0000</text><text x="423.0" y="516.5" textLength="63.5" lengthAdjust="spacingAndGlyphs">3.0000</text><text x="220.0" y="698.5" textLength="63.5" lengthAdjust="spacingAndGlyphs">4.0000</text><text x="816.2" y="778.8" textLength="63.5" lengthAdjust="spacingAndGlyphs">2.0000</text><text x="543.0" y="904.5" textLength="63.5" lengthAdjust="spacingAndGlyphs">6.0000</text><text x="914.0" y="618.3" textLength="63.5" lengthAdjust="spacingAndGlyphs">2.0000</text><text x="1143.7" y="698.5" textLength="63.5" lengthAdjust="spacingAndGlyphs">4.0000</text><text x="1026.0" y="889.5" textLength="63.5" lengthAdjust="spacingAndGlyphs">2.0000</text></g>
</svg>
<svg width="1915" height="1032" font-family="Liberation Sans" font-size="15" fill="#e0e0e0">
<!-- viewport label -->
<text x="10" y="253" font-size="14" fill="#d8d8d8" textLength="155" lengthAdjust="spacingAndGlyphs">[−][Top][2D Wireframe]</text>
<!-- viewport controls -->
<rect x="1837" y="250" width="11" height="3" fill="#e0e0e0" stroke="#111" stroke-width="0.5"/>
<rect x="1862.5" y="246.5" width="8" height="8" fill="none" stroke="#e0e0e0" stroke-width="2"/>
<path d="M1865 245 L1865 243.5 L1873 243.5 L1873 251.5 L1872 251.5" fill="none" stroke="#e0e0e0" stroke-width="1.5"/>
<path d="M1887 245 L1897 255 M1897 245 L1887 255" stroke="#e8e8e8" stroke-width="2.4"/>
<!-- viewcube -->
<circle cx="1826" cy="345.5" r="55" fill="none" stroke="#464c56" stroke-width="14"/>
<rect x="1799.5" y="319.5" width="53" height="53" fill="#b9babe"/>
<rect x="1809" y="329" width="34" height="34" fill="#a9aaaf"/>
<text x="1814" y="352" font-size="14" font-weight="bold" fill="#555a63" textLength="23" lengthAdjust="spacingAndGlyphs">TOP</text>
<g font-size="21" font-weight="bold" fill="#bdbec1" text-anchor="middle">
<text x="1826" y="296">N</text><text x="1826" y="412">S</text><text x="1768" y="354">W</text><text x="1884" y="354">E</text>
</g>
<rect x="1797.5" y="436.5" width="55" height="19" rx="6" fill="#8f9198" stroke="#a8aab0" stroke-width="1"/>
<text x="1801" y="451" font-size="12" fill="#5d6068" textLength="32" lengthAdjust="spacingAndGlyphs">WCS</text>
<path d="M1838 443 L1846 443 L1842 448 Z" fill="none" stroke="#6d7078" stroke-width="1"/>
<!-- navbar -->
<rect x="1868" y="488" width="40" height="259" rx="3" fill="#595d65" stroke="#3a3e45" stroke-width="0.8"/>
<circle cx="1900.5" cy="494" r="3.5" fill="#6a6e75" stroke="#45484f" stroke-width="1"/>
<path d="M1898.5 492 L1902.5 496 M1902.5 492 L1898.5 496" stroke="#45484f" stroke-width="0.8"/>
<circle cx="1900.5" cy="740" r="3.5" fill="#6a6e75" stroke="#45484f" stroke-width="1"/>
<path d="M1870 557.5 L1906 557.5 M1870 644.5 L1906 644.5 M1870 690.5 L1906 690.5" stroke="#54585f" stroke-width="1"/>
<g fill="none" stroke="#45484f" stroke-width="1.6">
<path d="M1887 511 A12 12 0 1 0 1899 523 L1899 511 Z"/>
<circle cx="1887" cy="523" r="6.5"/>
<path d="M1881 527 L1877 531 M1893 527 L1897 531"/>
<path d="M1879 585 L1875 576 C1874 573 1877 572 1879 575 L1880 577 L1880 565 C1880 562 1883 562 1883 565 L1883 573 L1883 562 C1883 559 1887 559 1887 562 L1887 573 L1887 563 C1887 560 1891 560 1891 563 L1891 574 L1891 566 C1891 563 1895 563 1895 566 L1895 578 C1895 584 1892 587 1887 587 C1883 587 1881 586 1879 585 Z"/>
<path d="M1874 596 L1899 621 M1899 596 L1874 621 M1874 596 L1874 601 M1874 596 L1879 596 M1899 596 L1894 596 M1899 596 L1899 601 M1874 621 L1874 616 M1874 621 L1879 621"/>
<circle cx="1893" cy="616" r="5.5" fill="#595d65"/>
<path d="M1897 620 L1902 625" stroke-width="2.5"/>
<ellipse cx="1887" cy="660" rx="11" ry="5"/>
<path d="M1884 670 L1884 650 L1881 650 L1887 643 L1893 650 L1890 650 L1890 670 Z" fill="#595d65"/>
<rect x="1874" y="699" width="7" height="7"/><rect x="1884" y="699" width="7" height="7"/><rect x="1894" y="699" width="7" height="7"/>
<rect x="1874" y="709" width="18" height="16"/>
</g>
<path d="M1884 547 L1890 547 L1887 551 Z M1884 634 L1890 634 L1887 638 Z M1884 680 L1890 680 L1887 684 Z" fill="#45484f"/>
<path d="M1880 712 L1888 717 L1880 722 Z" fill="#45484f"/>
<!-- command line -->
<rect x="393" y="941" width="76" height="33" rx="3" fill="#2a303b"/>
<g fill="#d0d0d0"><rect x="398.5" y="947.0" width="1.8" height="1.8"/><rect x="402" y="947.0" width="1.8" height="1.8"/><rect x="398.5" y="950.6" width="1.8" height="1.8"/><rect x="402" y="950.6" width="1.8" height="1.8"/><rect x="398.5" y="954.2" width="1.8" height="1.8"/><rect x="402" y="954.2" width="1.8" height="1.8"/><rect x="398.5" y="957.8" width="1.8" height="1.8"/><rect x="402" y="957.8" width="1.8" height="1.8"/><rect x="398.5" y="961.4" width="1.8" height="1.8"/><rect x="402" y="961.4" width="1.8" height="1.8"/><rect x="398.5" y="965.0" width="1.8" height="1.8"/><rect x="402" y="965.0" width="1.8" height="1.8"/><rect x="398.5" y="968.6" width="1.8" height="1.8"/><rect x="402" y="968.6" width="1.8" height="1.8"/></g>
<path d="M413 951 L422 961 M422 951 L413 961" stroke="#d8d8d8" stroke-width="2.2"/>
<path d="M441.5 965.5 L451 956" stroke="#b0b0b0" stroke-width="3" stroke-linecap="round"/>
<path d="M449 958 A6 6 0 0 1 454 948 L451.5 951.5 L453.5 953.5 L457 951 A6 6 0 0 1 447 956 Z" fill="#b0b0b0"/>
<rect x="465" y="942" width="1061" height="32" rx="3" fill="#c0c1c3"/>
<rect x="470.5" y="950.5" width="19" height="15" fill="none" stroke="#5e6166" stroke-width="1.3"/>
<rect x="470.5" y="950.5" width="19" height="3" fill="#5e6166"/>
<path d="M473 957 L476 959 L473 961 M477 962 L481 962" stroke="#5e6166" stroke-width="1"/>
<path d="M492 955 L502 955 L497 960 Z" fill="#5a5d63"/>
<text x="511" y="963" font-family="Liberation Mono" font-style="italic" font-size="14" fill="#6a6d72" textLength="125" lengthAdjust="spacingAndGlyphs">Type a command</text>
<path d="M1509 961 L1520 961 L1514.5 955 Z" fill="#5a5d63"/>
<rect x="6" y="972" width="389" height="2" fill="#000"/>
<rect x="1526" y="972" width="386" height="2" fill="#000"/>
<rect x="6" y="974" width="1906" height="5" fill="#3b4453"/>
<!-- layout tabs -->
<rect x="26" y="987" width="20" height="2.2" fill="#e0e0e0"/><rect x="26" y="994" width="20" height="2.2" fill="#e0e0e0"/><rect x="26" y="1000" width="20" height="2.2" fill="#e0e0e0"/>
<path d="M69 979 L142 979 L132 1009 L57 1009 Z" fill="#3b4453"/>
<text x="78" y="1000" font-weight="bold" fill="#f0f0f0" textLength="44" lengthAdjust="spacingAndGlyphs">Model</text>
<text x="152" y="1000" textLength="51" lengthAdjust="spacingAndGlyphs">Layout1</text>
<path d="M222 984 L215 1003" stroke="#5a6170" stroke-width="1.2"/>
<text x="233" y="1000" textLength="53" lengthAdjust="spacingAndGlyphs">Layout2</text>
<path d="M305 984 L297 1003" stroke="#5a6170" stroke-width="1.2"/>
<path d="M327.5 986 L327.5 1003 M319 994.5 L336 994.5" stroke="#e0e0e0" stroke-width="2"/>
<path d="M358 984 L350 1003" stroke="#5a6170" stroke-width="1.2"/>
<!-- status bar -->
<g fill="#3b4453">
<rect x="1196" y="981" width="59" height="30"/>
<rect x="1258" y="981" width="79" height="30"/>
<rect x="1341" y="981" width="129" height="30"/>
<rect x="1473" y="981" width="79" height="30"/>
<rect x="1555" y="981" width="132" height="30"/>
<rect x="1690" y="981" width="49" height="30"/>
<rect x="1741" y="981" width="29" height="30"/>
<rect x="1774" y="981" width="30" height="30"/>
<rect x="1807" y="981" width="38" height="30"/>
<rect x="1848" y="981" width="30" height="30"/>
<rect x="1880" y="981" width="30" height="30"/>
</g>
<g fill="#5a8fd0">
<rect x="1259" y="982" width="28" height="28"/>
<rect x="1372" y="982" width="28" height="28"/>
<rect x="1474" y="982" width="28" height="28"/>
<rect x="1503" y="982" width="28" height="28"/>
<rect x="1556" y="982" width="28" height="28"/>
</g>
<text x="1200" y="1002" textLength="51" lengthAdjust="spacingAndGlyphs">MODEL</text>
<path d="M1263 989.5 L1283 989.5 M1263 994 L1283 994 M1263 998.5 L1283 998.5 M1263 1003 L1283 1003 M1267.5 985 L1267.5 1007 M1272 985 L1272 1007 M1276.5 985 L1276.5 1007 M1281 985 L1281 1007" stroke="#f0f0f0" stroke-width="1.3"/>
<g fill="#e0e0e0"><rect x="1295" y="989" width="2.5" height="2.5"/><rect x="1301" y="989" width="2.5" height="2.5"/><rect x="1307" y="989" width="2.5" height="2.5"/><rect x="1295" y="995" width="2.5" height="2.5"/><rect x="1301" y="995" width="2.5" height="2.5"/><rect x="1307" y="995" width="2.5" height="2.5"/><rect x="1295" y="1001" width="2.5" height="2.5"/><rect x="1301" y="1001" width="2.5" height="2.5"/><rect x="1307" y="1001" width="2.5" height="2.5"/></g>
<path d="M1323 993 L1332 993 L1327.5 998 Z" fill="#d9d9d9"/>
<path d="M1346.5 986 L1346.5 1005.5 L1366 1005.5 M1346.5 998 L1350 998 L1350 1005" fill="none" stroke="#d0d0d0" stroke-width="1.2"/>
<circle cx="1385" cy="997" r="7" fill="none" stroke="#f0f0f0" stroke-width="1.5"/>
<path d="M1380 1004 L1393 989" stroke="#f0f0f0" stroke-width="1.5"/>
<path d="M1406 993 L1415 993 L1410.5 998 Z" fill="#d9d9d9"/>
<path d="M1432 987 L1442 1006" stroke="#e84a5f" stroke-width="1.3"/><path d="M1437 985 L1437 1007" stroke="#5fd37a" stroke-width="1.3"/>
<circle cx="1437" cy="997" r="2" fill="none" stroke="#d0d0d0"/>
<path d="M1456 993 L1465 993 L1460.5 998 Z" fill="#d9d9d9"/>
<path d="M1479 1005 L1497 989 M1487 1005 L1479 1005" fill="none" stroke="#f0f0f0" stroke-width="1.5"/>
<rect x="1509.5" y="989.5" width="17" height="17" fill="none" stroke="#f0f0f0" stroke-width="1.4"/>
<rect x="1507" y="987" width="5" height="5" fill="#5a8fd0" stroke="#f0f0f0" stroke-width="1"/>
<path d="M1538 993 L1547 993 L1542.5 998 Z" fill="#d9d9d9"/>
<path d="M1569 986 L1562 1006 L1569 1001 L1576 1006 Z" fill="#f0f0f0"/><circle cx="1577" cy="990" r="3" fill="none" stroke="#f0f0f0" stroke-width="1.2"/>
<path d="M1599 986 L1592 1006 L1599 1001 L1606 1006 Z" fill="#d8d8d8"/><path d="M1604 986 L1602 991 L1606 991 L1603 996" stroke="#d8d8d8" stroke-width="1" fill="none"/>
<path d="M1628 986 L1621 1006 L1628 1001 L1635 1006 Z" fill="#d8d8d8"/>
<text x="1648" y="1002" textLength="20" lengthAdjust="spacingAndGlyphs">1:1</text>
<path d="M1672 993 L1681 993 L1676.5 998 Z" fill="#d9d9d9"/>
<circle cx="1705" cy="996" r="6.5" fill="none" stroke="#d8d8d8" stroke-width="4" stroke-dasharray="3 2.1"/>
<circle cx="1705" cy="996" r="5" fill="#d8d8d8"/><circle cx="1705" cy="996" r="2.5" fill="#3b4453"/>
<path d="M1725 993 L1734 993 L1729.5 998 Z" fill="#d9d9d9"/>
<path d="M1755.5 986 L1755.5 1006 M1745.5 996 L1765.5 996" stroke="#e8e8e8" stroke-width="2.2"/>
<rect x="1780.5" y="986.5" width="7" height="7" fill="none" stroke="#d0d0d0" stroke-width="1.2"/>
<circle cx="1795" cy="996" r="4.5" fill="none" stroke="#d0d0d0" stroke-width="1.2"/>
<path d="M1786 1006 L1790 999 L1794 1006 Z" fill="none" stroke="#d0d0d0" stroke-width="1.2"/>
<path d="M1816 986 L1828 986 L1832 990 L1832 1000 L1816 1000 Z" fill="#3a72c0"/>
<path d="M1816 997 L1826 999 L1832 1004 L1816 1004 Z" fill="#f5b82a"/>
<path d="M1820 985 L1820 996 M1816 991 L1828 991" stroke="#e8e8e8" stroke-width="1"/>
<path d="M1826 1002 L1829 1005 L1835 999" fill="none" stroke="#5fd37a" stroke-width="1.8"/>
<rect x="1853.5" y="988.5" width="19" height="14" fill="none" stroke="#d0d0d0" stroke-width="1.2"/>
<path d="M1866 991 L1870 991 L1870 995 M1870 991 L1866 995 M1857 996 L1857 1000 L1861 1000 M1857 1000 L1861 996" fill="none" stroke="#d0d0d0" stroke-width="1.3"/>
<rect x="1885" y="987" width="20" height="2.5" fill="#e8e8e8"/><rect x="1885" y="994.5" width="20" height="2.5" fill="#e8e8e8"/><rect x="1885" y="1002" width="20" height="2.5" fill="#e8e8e8"/>
</svg>
<svg width="1915" height="1032">
<path d="M1906 0 L1915 0 L1915 8 A 11 11 0 0 0 1906 0.5 Z" fill="#1a50c0"/>
<path d="M1906 1.0 A 10 10 0 0 1 1915 7" fill="none" stroke="#0a96e0" stroke-width="1.3"/>
<path d="M1902 1021 L1915 1021 L1915 1012 A 12 12 0 0 1 1902 1020 Z" fill="#dcdce8"/>
<path d="M1902 1019.5 A 12 12 0 0 0 1915 1011.5" fill="none" stroke="#0a96e0" stroke-width="1.3"/>
</svg>
</div></body></html>
